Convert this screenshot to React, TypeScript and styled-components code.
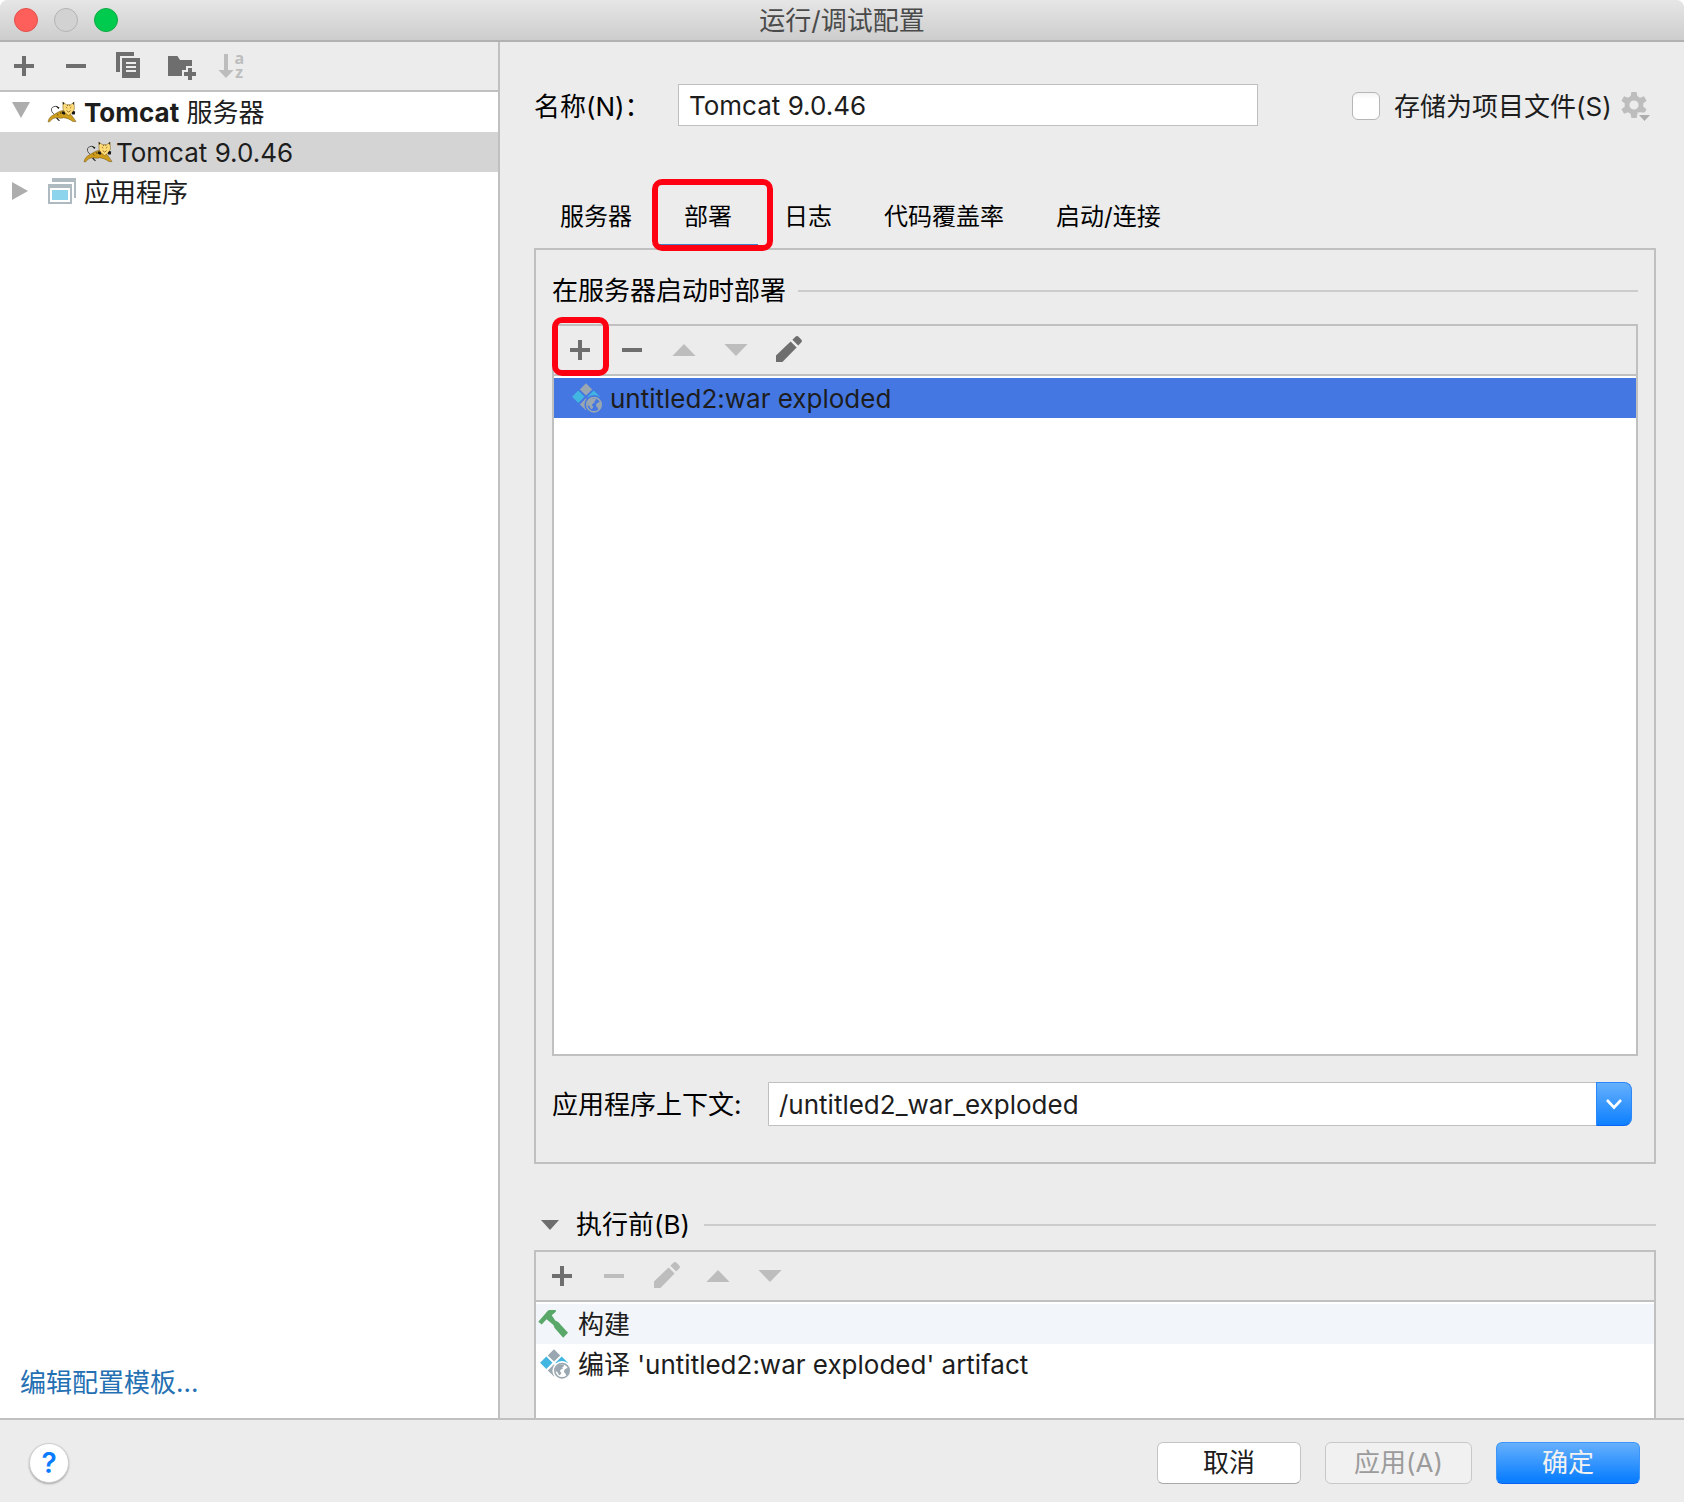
import React, { useState } from "react";
import styled, { createGlobalStyle, css } from "styled-components";

const FONT = `Inter, "Noto Sans CJK SC", sans-serif`;
const LINE = "#c0c0c0";
const PANEL = "#ececec";
const INK = "#1d1d1d";

const GlobalStyle = createGlobalStyle`
  *, *::before, *::after { box-sizing: border-box; }
  body { margin: 0; background: #ffffff; }
  button, input, select { font: inherit; color: inherit; }
`;

/* ---------- window frame ---------- */

const Window = styled.div`
  display: flex;
  flex-direction: column;
  min-height: 100vh;
  background: ${PANEL};
  border-radius: 8px 8px 0 0;
  overflow: hidden;
  font-family: ${FONT};
  font-size: 26px;
  line-height: 34px;
  color: #000000;
`;

const TitleBar = styled.header`
  display: grid;
  grid-template-columns: 1fr auto 1fr;
  align-items: center;
  height: 42px;
  padding: 0 14px;
  background: linear-gradient(#e6e6e6, #cdcdcd);
  border-bottom: 2px solid #b1b1b1;
`;

const TrafficLights = styled.div`
  display: flex;
  gap: 16px;
`;

const Light = styled.button<{ $fill: string; $edge: string }>`
  width: 24px;
  height: 24px;
  padding: 0;
  border-radius: 50%;
  border: 1px solid ${(p) => p.$edge};
  background: ${(p) => p.$fill};
`;

const Title = styled.h1`
  margin: 0;
  padding-top: 2px;
  font-size: 26px;
  font-weight: 400;
  color: #4a4a4a;
`;

const Body = styled.div`
  display: flex;
  flex: 1;
  align-items: stretch;
`;

/* ---------- shared controls ---------- */

const Toolbar = styled.div<{ $inset: number }>`
  display: flex;
  align-items: center;
  gap: 20px;
  height: 50px;
  padding: 0 ${(p) => p.$inset}px;
  background: ${PANEL};
  border-bottom: 2px solid ${LINE};
`;

const ToolButton = styled.button`
  position: relative;
  display: block;
  flex: none;
  width: 32px;
  height: 32px;
  padding: 0;
  border: 0;
  background: none;
  color: #6e6e6e;

  &:disabled {
    color: #bdbdbd;
  }

  > svg {
    display: block;
    overflow: visible;
  }
`;

const Marker = styled.span<{ $kind: "tab" | "tool" }>`
  position: absolute;
  z-index: 1;
  border: 6px solid #ff0013;
  border-radius: 10px;
  pointer-events: none;
  ${(p) =>
    p.$kind === "tab"
      ? css`
          inset: -5px -15px -7px -6px;
        `
      : css`
          inset: -17px -13px -10px -12px;
        `}
`;

const Row = styled.li<{ $indent: number; $gap: number; $fill?: string }>`
  display: flex;
  align-items: center;
  gap: ${(p) => p.$gap}px;
  height: 40px;
  padding-left: ${(p) => p.$indent}px;
  background: ${(p) => p.$fill ?? "transparent"};
  color: ${INK};
  white-space: nowrap;

  > svg {
    flex: none;
  }

  > span {
    padding-top: 2px;
  }
`;

const List = styled.ul`
  margin: 0;
  padding: 0;
  list-style: none;
`;

/* ---------- sidebar ---------- */

const Sidebar = styled.aside`
  display: flex;
  flex-direction: column;
  flex: none;
  width: 500px;
  background: #ffffff;
  border-right: 2px solid ${LINE};
`;

const Twisty = styled.button`
  flex: none;
  width: 40px;
  height: 32px;
  padding: 0;
  border: 0;
  background: none;

  > svg {
    display: block;
  }
`;

const TemplatesLink = styled.a`
  align-self: flex-start;
  margin: auto 20px 18px;
  color: #2470b3;
  text-decoration: none;
`;

/* ---------- main column ---------- */

const Main = styled.main`
  display: flex;
  flex: 1;
  flex-direction: column;
  min-width: 0;
  padding: 42px 28px 0 34px;
`;

const NameRow = styled.div`
  display: flex;
  align-items: center;
`;

const NameLabel = styled.label`
  flex: none;
  width: 144px;
  padding-top: 4px;
`;

const NameInput = styled.input`
  flex: 1;
  min-width: 0;
  height: 42px;
  padding: 0 10px;
  border: 1px solid #bfbfbf;
  border-radius: 0;
  background: #ffffff;
  color: ${INK};
`;

const StoreGroup = styled.div`
  display: flex;
  flex: none;
  align-items: center;
  width: 304px;
  margin-left: 94px;
  padding: 2px 6px 0 0;
`;

const StoreLabel = styled.label`
  display: flex;
  flex: 1;
  align-items: center;
  gap: 14px;
  color: ${INK};
  white-space: nowrap;

  > span {
    padding-top: 2px;
  }
`;

const CheckBox = styled.input`
  appearance: none;
  flex: none;
  width: 28px;
  height: 28px;
  margin: 0;
  border: 1px solid #b6b6b6;
  border-radius: 6px;
  background: linear-gradient(#f4f4f4, #ffffff 6px);

  &:checked {
    background: #1a82ff;
  }
`;

const TabBar = styled.div`
  display: flex;
  margin-top: 58px;
`;

const Tab = styled.button`
  position: relative;
  height: 64px;
  padding: 6px 26px 0;
  border: 0;
  border-bottom: 4px solid transparent;
  background: none;
  font-size: 24px;
  white-space: nowrap;

  &[aria-selected="true"] {
    border-bottom-color: #4083c9;
  }
`;

const TabPanel = styled.section`
  display: flex;
  flex: 1;
  flex-direction: column;
  padding: 24px 16px 36px;
  border: 2px solid ${LINE};
`;

const Heading = styled.h2<{ $gap: number }>`
  display: flex;
  align-items: center;
  gap: ${(p) => p.$gap}px;
  margin: 0;
  font-size: 26px;
  font-weight: 400;

  &::after {
    content: "";
    flex: 1;
    height: 2px;
    background: #cccccc;
  }
`;

const DeployBox = styled.div`
  flex: 1;
  min-height: 200px;
  margin-top: 16px;
  border: 2px solid ${LINE};
  background: #ffffff;

  > ul {
    padding-top: 2px;
  }
`;

const ContextRow = styled.div`
  display: flex;
  align-items: center;
  margin-top: 26px;
  padding-right: 6px;
`;

const ContextLabel = styled.label`
  flex: none;
  width: 216px;
  padding-top: 2px;
`;

const Combo = styled.div`
  display: grid;
  flex: 1;
  grid-template-columns: 1fr 36px;
  height: 44px;
`;

const ComboSelect = styled.select`
  appearance: none;
  grid-area: 1 / 1 / 2 / 3;
  min-width: 0;
  padding: 2px 48px 0 10px;
  border: 1px solid #bfbfbf;
  border-radius: 0 8px 8px 0;
  background: #ffffff;
  color: ${INK};
`;

const ComboArrow = styled.span`
  grid-area: 1 / 2 / 2 / 3;
  display: grid;
  place-items: center;
  z-index: 1;
  border: 1px solid #2a86fb;
  border-bottom-color: #0a63f5;
  border-radius: 0 8px 8px 0;
  background: linear-gradient(#66b0fc, #0d80ff);
  pointer-events: none;
`;

const Before = styled.section`
  margin-top: 44px;
`;

const Disclosure = styled.button`
  display: flex;
  align-items: center;
  gap: 12px;
  padding: 0;
  border: 0;
  background: none;
  white-space: nowrap;

  > svg {
    flex: none;
  }
`;

const BeforeBox = styled.div`
  min-height: 168px;
  margin-top: 8px;
  border: 2px solid ${LINE};
  border-bottom: 0;
  background: #ffffff;

  > ul {
    padding-top: 2px;
  }
`;

/* ---------- footer ---------- */

const Footer = styled.footer`
  display: flex;
  align-items: center;
  gap: 24px;
  height: 84px;
  padding: 4px 44px 0 29px;
  border-top: 2px solid ${LINE};
`;

const HelpButton = styled.button`
  width: 40px;
  height: 40px;
  margin-right: auto;
  padding: 0;
  border: 1px solid #cfcfcf;
  border-radius: 50%;
  background: #ffffff;
  box-shadow: 0 1px 2px rgba(0, 0, 0, 0.3);
  color: #0a7cff;
  font-size: 28px;
  font-weight: 600;
`;

const PushButton = styled.button<{ $primary?: boolean }>`
  min-width: 144px;
  height: 42px;
  padding: 0 28px;
  border: 1px solid #c4c4c4;
  border-bottom-color: #a9a9a9;
  border-radius: 6px;
  background: #ffffff;
  color: ${INK};

  &:disabled {
    border-color: #c8c8c8;
    background: #f1f1f1;
    color: #9b9b9b;
  }

  ${(p) =>
    p.$primary &&
    css`
      border-color: #3c96f9;
      border-bottom-color: #0a62f5;
      background: linear-gradient(#66b0fc, #0d80ff 90%);
      color: #f2f2f2;
    `}
`;

/* ---------- icons ---------- */

const Glyph = ({ children }: { children: React.ReactNode }) => (
  <svg width="32" height="32" viewBox="0 0 16 16" fill="currentColor" aria-hidden="true">
    {children}
  </svg>
);

const AddIcon = () => (
  <Glyph>
    <path d="M9 7h4v2H9v4H7V9H3V7h4V3h2z" />
  </Glyph>
);
const RemoveIcon = () => (
  <Glyph>
    <path d="M3 7h10v2H3z" />
  </Glyph>
);
const CopyIcon = () => (
  <Glyph>
    <path d="M2 1h9v2H4v8H2z" />
    <path fillRule="evenodd" d="M5 4h9v10H5zM7 6v1h5V6zM7 8v1h5V8zM7 10v1h5v-1z" />
  </Glyph>
);
const NewFolderIcon = () => (
  <Glyph>
    <path d="M2 3h4.700L8 5h6v3h-3v2H9v3H2z" />
    <path d="M12 9h2v2h2v2h-2v2h-2v-2h-2v-2h2z" />
  </Glyph>
);
const SortIcon = () => (
  <Glyph>
    <path d="M4 2h2v8h2.800L5 14 1.200 10H4z" />
    <g fontFamily="'Open Sans', sans-serif" fontSize="8" fontWeight="700">
      <text x="9.300" y="7">a</text>
      <text x="9.600" y="14">z</text>
    </g>
  </Glyph>
);
const UpIcon = () => (
  <Glyph>
    <path d="M8 5l5.800 6H2.200z" />
  </Glyph>
);
const DownIcon = () => (
  <Glyph>
    <path d="M8 11L2.200 5h11.600z" />
  </Glyph>
);
const EditIcon = () => (
  <Glyph>
    <path d="M2 10.800l7.300-7.100 3 3L5.200 14H2z" />
    <path d="M10.200 2.900l1.500-1.500a1.100 1.100 0 0 1 1.600 0l1.300 1.300a1.100 1.100 0 0 1 0 1.600l-1.500 1.500z" />
  </Glyph>
);

const TwistyOpen = () => (
  <svg width="30" height="32" viewBox="0 0 30 32" aria-hidden="true">
    <path d="M12 6h18l-9 16z" fill="#adadad" />
  </svg>
);
const TwistyClosed = () => (
  <svg width="30" height="32" viewBox="0 0 30 32" aria-hidden="true">
    <path d="M12 6v18l16-9z" fill="#adadad" />
  </svg>
);
const DisclosureIcon = () => (
  <svg width="30" height="34" viewBox="0 0 30 34" aria-hidden="true">
    <path d="M7 12h18l-9 10z" fill="#6e6e6e" />
  </svg>
);

const TomcatIcon = () => (
  <svg width="32" height="32" viewBox="-2 -6 32 32" aria-hidden="true">
    <path
      d="M6.500 12.500C4 11 3 8.500 3.600 6.600 4.300 4.500 7 4 9.500 4.600"
      fill="none"
      stroke="#333"
      strokeWidth="0.800"
    />
    <path d="M7.500 3.800l4 1.800-1.200 1.300z" fill="#111" />
    <path
      d="M0 19.800c.6-3.400 2.600-5.400 5.600-7 3.200-1.700 6.400-4.600 10.400-4.400 5 .4 9.200 6.600 12 11.200h-3c-3-2.200-6-3.600-9.600-3.900-2 .9-4.400.3-6.400.1-2.600-.1-4.600 1-6 2.400l-1.200 1.600z"
      fill="#cf9d1c"
      stroke="#6a5010"
      strokeWidth="0.500"
    />
    <path d="M9 11.500l1.200 2M12 10l1 2" stroke="#4a3a08" strokeWidth="0.700" />
    <path d="M9.500 15.800l2.700 3.400-2.200-.6-2-2.600z" fill="#222" />
    <path
      d="M14.800 0l3.600 2.700h4.400L26 0l.4 7-1.800 3.600-4 3-3.800-3-1.800-3.400z"
      fill="#ffdc78"
      stroke="#6e5518"
      strokeWidth="0.500"
    />
    <path d="M14.800 0l.2 3 1.400-1.700zM26 0l-.2 3-1.400-1.700z" fill="#222" />
    <path
      d="M17.800 5l1.500 1.400M23.400 5l-1.500 1.400M19.500 2.800v1.300M21.700 2.800v1.300M18.600 8.600l2 1.500 2-1.500"
      fill="none"
      stroke="#7d6018"
      strokeWidth="0.800"
    />
    <path d="M13.800 9.400h2.600l1 2.600-1.400.8-2.200-1.400zM23.800 10.400l1.600-1.400 1.800.6-.4 2.800h-2.600z" fill="#161616" />
  </svg>
);

const AppIcon = () => (
  <svg width="32" height="32" viewBox="-2 -2 32 32" aria-hidden="true">
    <path d="M4 0h24v20h-2V4H4z" fill="#aeb9c0" />
    <path d="M0 6h24v20H0z" fill="#aeb9c0" />
    <path d="M2 10h20v14H2z" fill="#fff" />
    <path d="M4 12h16v10H4z" fill="#8cd3ec" />
  </svg>
);

const ArtifactIcon = ({ id }: { id: string }) => (
  <svg width="32" height="32" viewBox="-2 -1 32 32" aria-hidden="true">
    <mask id={id}>
      <path d="M-2-1h32v32H-2z" fill="#fff" />
      <circle cx="22" cy="21.700" r="9.600" fill="#000" />
    </mask>
    <g mask={`url(#${id})`}>
      <path d="M14 .2l6.200 6.200-6.200 6.200-6.200-6.200z" fill="#9aa7b0" />
      <path d="M6.300 7.600l6.200 6.200-6.200 6.200-6.200-6.200z" fill="#40b6e0" />
      <path d="M21.700 7.600l6.200 6.200-6.200 6.200-6.200-6.200z" fill="#40b6e0" />
      <path d="M14 15.200l6.200 6.200-6.200 6.200-6.200-6.200z" fill="#9aa7b0" />
    </g>
    <circle cx="22" cy="21.700" r="7.200" fill="none" stroke="#9aa7b0" strokeWidth="1.600" />
    <path
      d="M15.400 19.200l3.400-3.400 4.700-.6.600 1.800-1.800 1.200.6 1.400-2.300 1.200-.6 1.600 1.400 1.400-1.400 2.400-1.300-.4-1-2.400-2.300-1.600zM24.600 20.400l2.800-1.600 1.600 2-.4 3.600-2.300 2.200-1.200-2.600-1.300-1z"
      fill="#9aa7b0"
    />
  </svg>
);

const HammerIcon = () => (
  <svg width="32" height="32" viewBox="0 -2 32 32" aria-hidden="true">
    <path
      d="M.3 11.800L9.400 1.200C10.200.4 11 .2 12 .1L17.800 0v1.800l-4 3.400 3.400 5.200 3 1.600L30 22.800l-4.800 5L16.600 18l-1.200-3L8.600 9.300 7.400 10.400l-3.700 4z"
      fill="#59a869"
    />
  </svg>
);

const GearIcon = () => (
  <svg width="32" height="32" viewBox="-16 -15 32 32" aria-hidden="true">
    <g fill="#bdbdbd">
      {[0, 60, 120, 180, 240, 300].map((a) => (
        <path key={a} d="M-2.600-13h5.200l1 5.500h-7.200z" transform={`rotate(${a})`} />
      ))}
    </g>
    <circle r="7" fill="none" stroke="#bdbdbd" strokeWidth="4.800" />
    <path d="M3 7.500h15v4l-6 7z" fill="#ececec" />
    <path d="M5 10h11l-5.500 6z" fill="#adadad" />
  </svg>
);

/* ---------- screen ---------- */

const TABS = ["服务器", "部署", "日志", "代码覆盖率", "启动/连接"];

export default function App() {
  const [tab, setTab] = useState("部署");

  return (
    <>
      <GlobalStyle />
      <Window>
        <TitleBar>
          <TrafficLights>
            <Light $fill="#ff5f5a" $edge="#e2504b" aria-label="关闭" />
            <Light $fill="#d2d2d2" $edge="#b3b3b3" aria-label="最小化" />
            <Light $fill="#00cb4e" $edge="#0fa944" aria-label="缩放" />
          </TrafficLights>
          <Title>运行/调试配置</Title>
        </TitleBar>

        <Body>
          <Sidebar>
            <Toolbar $inset={8}>
              <ToolButton aria-label="添加配置"><AddIcon /></ToolButton>
              <ToolButton aria-label="移除配置"><RemoveIcon /></ToolButton>
              <ToolButton aria-label="复制配置"><CopyIcon /></ToolButton>
              <ToolButton aria-label="新建文件夹"><NewFolderIcon /></ToolButton>
              <ToolButton aria-label="排序" disabled><SortIcon /></ToolButton>
            </Toolbar>
            <List>
              <Row $indent={0} $gap={6}>
                <Twisty aria-label="折叠 Tomcat 服务器"><TwistyOpen /></Twisty>
                <TomcatIcon />
                <span>
                  <strong>Tomcat</strong> 服务器
                </span>
              </Row>
              <Row $indent={82} $gap={2} $fill="#d4d4d4">
                <TomcatIcon />
                <span>Tomcat 9.0.46</span>
              </Row>
              <Row $indent={0} $gap={6}>
                <Twisty aria-label="展开应用程序"><TwistyClosed /></Twisty>
                <AppIcon />
                <span>应用程序</span>
              </Row>
            </List>
            <TemplatesLink href="#templates">编辑配置模板...</TemplatesLink>
          </Sidebar>

          <Main>
            <NameRow>
              <NameLabel htmlFor="config-name">名称(N)：</NameLabel>
              <NameInput id="config-name" type="text" defaultValue="Tomcat 9.0.46" />
              <StoreGroup>
                <StoreLabel>
                  <CheckBox type="checkbox" />
                  <span>存储为项目文件(S)</span>
                </StoreLabel>
                <ToolButton aria-label="存储选项" disabled><GearIcon /></ToolButton>
              </StoreGroup>
            </NameRow>

            <TabBar role="tablist">
              {TABS.map((name) => (
                <Tab key={name} role="tab" aria-selected={tab === name} onClick={() => setTab(name)}>
                  {name}
                  {name === "部署" && <Marker $kind="tab" />}
                </Tab>
              ))}
            </TabBar>

            <TabPanel role="tabpanel">
              <Heading $gap={12}>在服务器启动时部署</Heading>
              <DeployBox>
                <Toolbar $inset={10}>
                  <ToolButton aria-label="添加部署">
                    <AddIcon />
                    <Marker $kind="tool" />
                  </ToolButton>
                  <ToolButton aria-label="移除部署"><RemoveIcon /></ToolButton>
                  <ToolButton aria-label="上移" disabled><UpIcon /></ToolButton>
                  <ToolButton aria-label="下移" disabled><DownIcon /></ToolButton>
                  <ToolButton aria-label="编辑"><EditIcon /></ToolButton>
                </Toolbar>
                <List>
                  <Row $indent={16} $gap={8} $fill="#4477e2">
                    <ArtifactIcon id="artifact-deploy" />
                    <span>untitled2:war exploded</span>
                  </Row>
                </List>
              </DeployBox>
              <ContextRow>
                <ContextLabel htmlFor="app-context">应用程序上下文:</ContextLabel>
                <Combo>
                  <ComboSelect id="app-context">
                    <option>/untitled2_war_exploded</option>
                  </ComboSelect>
                  <ComboArrow>
                    <svg width="18" height="12" viewBox="0 0 18 12" aria-hidden="true">
                      <path d="M2 2l7 7.500L16 2" fill="none" stroke="#fff" strokeWidth="2.600" />
                    </svg>
                  </ComboArrow>
                </Combo>
              </ContextRow>
            </TabPanel>

            <Before>
              <Heading $gap={14}>
                <Disclosure aria-expanded="true">
                  <DisclosureIcon />
                  执行前(B)
                </Disclosure>
              </Heading>
              <BeforeBox>
                <Toolbar $inset={10}>
                  <ToolButton aria-label="添加任务"><AddIcon /></ToolButton>
                  <ToolButton aria-label="移除任务" disabled><RemoveIcon /></ToolButton>
                  <ToolButton aria-label="编辑任务" disabled><EditIcon /></ToolButton>
                  <ToolButton aria-label="上移任务" disabled><UpIcon /></ToolButton>
                  <ToolButton aria-label="下移任务" disabled><DownIcon /></ToolButton>
                </Toolbar>
                <List>
                  <Row $indent={2} $gap={8} $fill="#f2f5fa">
                    <HammerIcon />
                    <span>构建</span>
                  </Row>
                  <Row $indent={2} $gap={8}>
                    <ArtifactIcon id="artifact-build" />
                    <span>编译 'untitled2:war exploded' artifact</span>
                  </Row>
                </List>
              </BeforeBox>
            </Before>
          </Main>
        </Body>

        <Footer>
          <HelpButton aria-label="帮助">?</HelpButton>
          <PushButton>取消</PushButton>
          <PushButton disabled>应用(A)</PushButton>
          <PushButton $primary>确定</PushButton>
        </Footer>
      </Window>
    </>
  );
}
